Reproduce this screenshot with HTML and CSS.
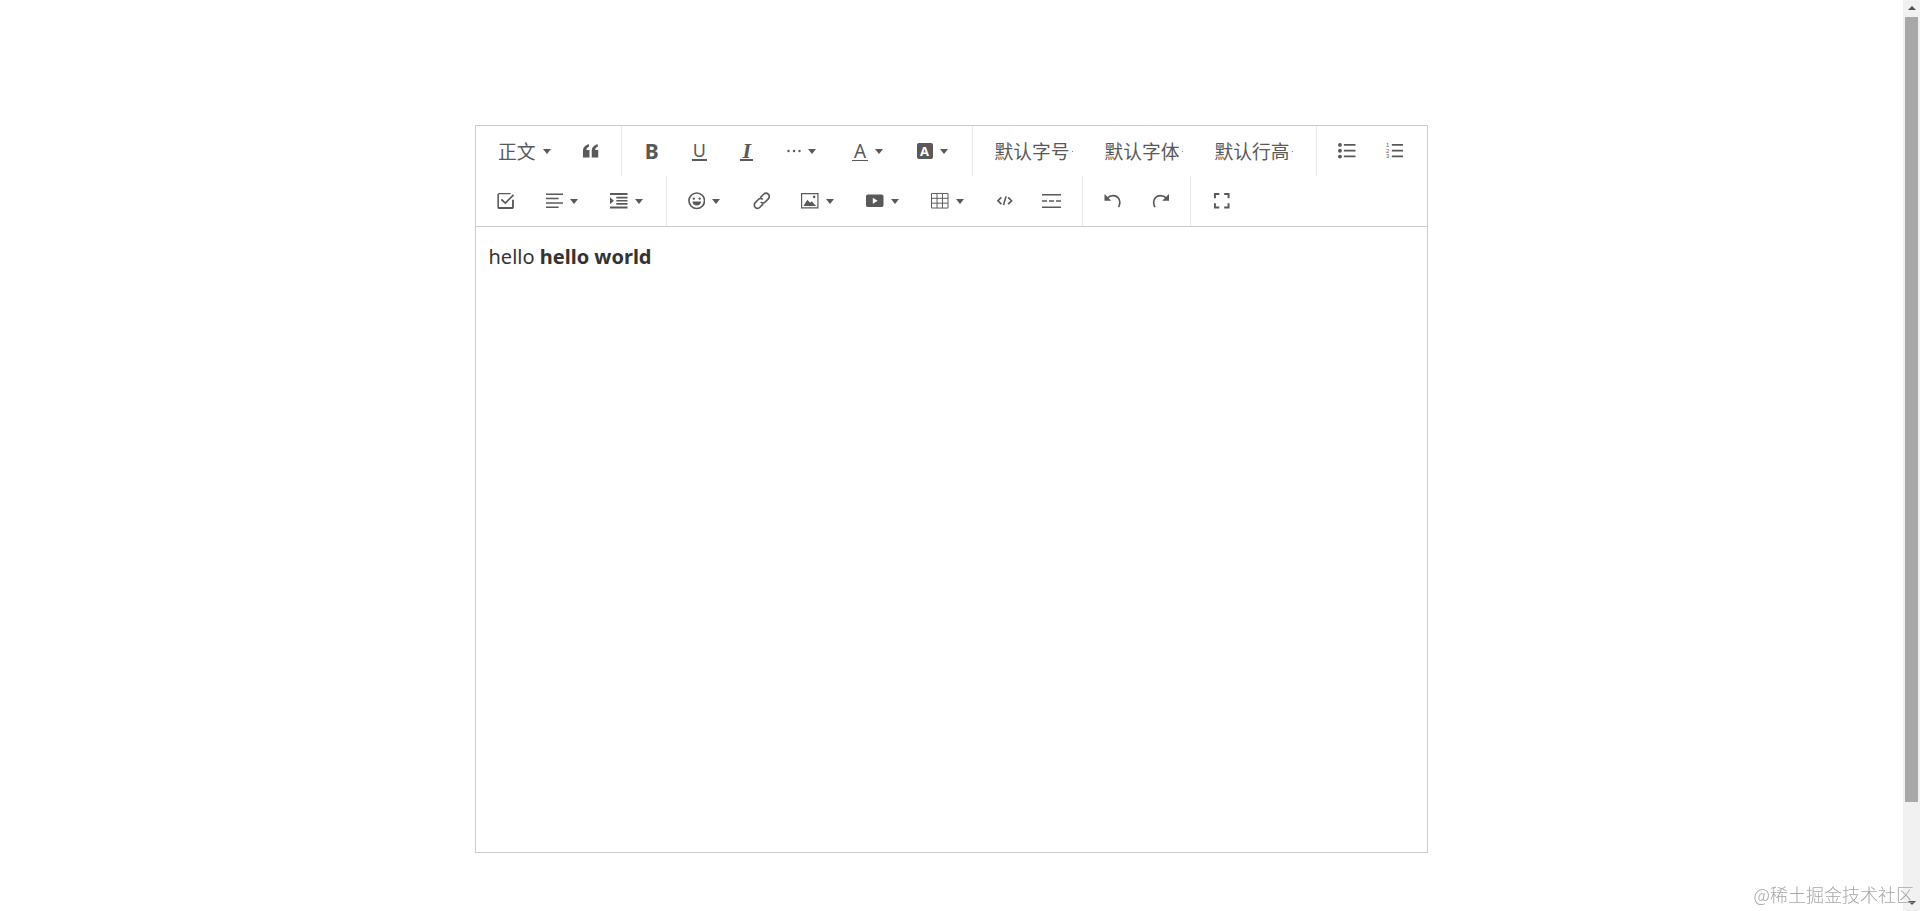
FILE: index.html
```html
<!DOCTYPE html>
<html lang="zh">
<head>
<meta charset="utf-8">
<title>Editor</title>
<link rel="stylesheet" href="styles.css">
</head>
<body>
<main class="page">
  <section class="editor">
    <div class="toolbar">
      <div class="row">
        <div class="item w85 pl16"><span class="label">正文</span><i class="caret"></i></div>
        <div class="item">
          <svg class="icon" viewBox="0 0 18 18"><path d="M1 16V9.5C1 5.5 3.200 3 7.200 2.200V4.800C5.500 5.300 4.700 6.300 4.600 8.200H7.700V16ZM10 16V9.500C10 5.500 12.200 3 16.200 2.200V4.800C14.500 5.300 13.700 6.300 13.600 8.200H16.700V16Z"/></svg>
        </div>
        <i class="divider"></i>
        <div class="item"><span class="g-bold">B</span></div>
        <div class="item"><span class="g-under">U</span></div>
        <div class="item"><span class="g-italic">I</span></div>
        <div class="item w62 pl16">
          <svg class="icon-more" viewBox="0 0 14 4"><circle cx="1.500" cy="2" r="1.200"/><circle cx="7" cy="2" r="1.200"/><circle cx="12.500" cy="2" r="1.200"/></svg><i class="caret"></i>
        </div>
        <div class="item w65 pl19"><span class="g-color">A</span><i class="caret"></i></div>
        <div class="item w68 pl18"><span class="g-bg">A</span><i class="caret"></i></div>
        <i class="divider"></i>
        <div class="item w110 pl15"><span class="label">默认字号</span><i class="dot"></i></div>
        <div class="item w110 pl15"><span class="label">默认字体</span><i class="dot"></i></div>
        <div class="item w110 pl15"><span class="label">默认行高</span><i class="dot"></i></div>
        <i class="divider"></i>
        <div class="item">
          <svg class="icon" viewBox="0 0 18 18"><circle cx="2" cy="3" r="2"/><circle cx="2" cy="9" r="2"/><circle cx="2" cy="15" r="2"/><path d="M6 2h12v1.800H6zM6 8h12v1.800H6zM6 14h12v1.800H6z"/></svg>
        </div>
        <div class="item">
          <svg class="icon" viewBox="0 0 18 18"><text class="tiny" x="0" y="5.500">1</text><text class="tiny" x="0" y="11">2</text><text class="tiny" x="0" y="16.500">3</text><path d="M6 2h12v1.800H6zM6 8h12v1.800H6zM6 14h12v1.800H6z"/></svg>
        </div>
      </div>
      <div class="row">
        <div class="item">
          <svg class="icon" viewBox="0 0 18 18"><path d="M2.500 1H14V2.200H2.500C2.300 2.200 2 2.500 2 2.700V15C2 15.300 2.300 15.500 2.500 15.500H15C15.300 15.500 15.500 15.300 15.500 15V8H17.400V15.500C17.400 16.700 16.500 17.600 15.300 17.600H2.500C1.300 17.600.4 16.700.4 15.500V2.800C.4 1.800 1.300 1 2.500 1Z"/><path d="M4.500 7.500L8.500 11.500L17 3" class="line"/></svg>
        </div>
        <div class="item w63 pl16">
          <svg class="icon" viewBox="0 0 18 18"><path d="M0 1.500h18v1.500H0zM0 6h13v1.500H0zM0 10.500h18v1.500H0zM0 15h13v1.500H0z"/></svg><i class="caret"></i>
        </div>
        <div class="item w67 pl17">
          <svg class="icon" viewBox="0 0 18 18"><path d="M0 1h18v2H0zM6.500 5H18v1.600H6.500zM6.500 8.200H18v1.600H6.500zM6.500 11.400H18v1.600H6.500zM0 15h18v2H0zM0 5.500L4 9L0 12.500Z"/></svg><i class="caret"></i>
        </div>
        <i class="divider"></i>
        <div class="item w64 pl14">
          <svg class="icon" viewBox="0 0 18 18"><circle cx="9" cy="9" r="8" class="line"/><circle cx="6" cy="6.800" r="1.200"/><circle cx="12" cy="6.800" r="1.200"/><path d="M4.500 9.800H13.500C13.300 12.300 11.500 14 9 14C6.500 14 4.700 12.300 4.500 9.800Z"/></svg><i class="caret"></i>
        </div>
        <div class="item">
          <svg class="icon" viewBox="0 0 18 18"><g class="line"><path d="M7.500 5.700L10.900 2.300A3.200 3.200 0 0 1 15.700 7L12.500 10.300A3 3 0 0 1 8 10.300"/><path d="M10.500 12.300L7.100 15.700A3.200 3.200 0 0 1 2.300 11L5.500 7.700A3 3 0 0 1 10 7.700"/></g></svg>
        </div>
        <div class="item w64 pl16">
          <svg class="icon" viewBox="0 0 18 18"><path d="M0 1h18v16H0zM1.200 2.200V15.800H16.800V2.200Z" fill-rule="evenodd"/><path d="M2.500 14.500L6.500 8L9.500 11L11 9.500L15.500 14.500Z"/><circle cx="13.500" cy="5" r="1.300"/></svg><i class="caret"></i>
        </div>
        <div class="item w65 pl17">
          <svg class="icon" viewBox="0 0 18 18"><path fill-rule="evenodd" d="M2 2.500H16C17.100 2.500 18 3.400 18 4.500V13.500C18 14.600 17.100 15.500 16 15.500H2C.9 15.500 0 14.600 0 13.500V4.500C0 3.400.9 2.500 2 2.500ZM7 6V12L12 9Z"/></svg><i class="caret"></i>
        </div>
        <div class="item w66 pl17">
          <svg class="icon" viewBox="0 0 18 18"><path class="thin" d="M.5 1.500h17v15H.5zM.5 6.500h17M.5 11.500h17M6.200 1.500v15M11.800 1.500v15"/></svg><i class="caret"></i>
        </div>
        <div class="item">
          <svg class="icon" viewBox="0 0 18 18"><g class="line"><path d="M5.500 5.500L2 9L5.500 12.500M12.500 5.500L16 9L12.500 12.500M10.300 4.500L7.700 13.500"/></g></svg>
        </div>
        <div class="item">
          <svg class="icon-wide" viewBox="0 0 19 18"><path d="M0 2h19v1.500H0zM0 14.500h19V16H0zM0 8.300h5v1.500H0zM7 8.300h5v1.500H7zM14 8.300h5v1.500H14z"/></svg>
        </div>
        <i class="divider"></i>
        <div class="item">
          <svg class="icon" viewBox="0 0 18 18"><path class="line" d="M3 6.500C5 4.500 7 3.800 9.500 3.800C13.500 3.800 16.300 6.800 16.300 10.500C16.300 12.500 15.800 14 15 15.500"/><path d="M.5 2V9H7.500Z"/></svg>
        </div>
        <div class="item">
          <svg class="icon" viewBox="0 0 18 18"><path class="line" d="M15 6.500C13 4.500 11 3.800 8.500 3.800C4.500 3.800 1.700 6.800 1.700 10.500C1.700 12.500 2.200 14 3 15.500"/><path d="M17.500 2V9H10.500Z"/></svg>
        </div>
        <i class="divider"></i>
        <div class="item">
          <svg class="icon" viewBox="0 0 18 18"><path d="M1 1h5.500v2H3v3.500H1zM11.500 1H17v5.500h-2V3h-3.500zM1 11.500h2V15h3.500v2H1zM15 11.500h2V17h-5.500v-2H15z"/></svg>
        </div>
      </div>
    </div>
    <div class="content">
      <p class="para">hello <strong class="strong">hello world</strong></p>
    </div>
  </section>
</main>
<div class="scrollbar">
  <i class="arrow-up"></i>
  <div class="thumb"></div>
  <i class="arrow-down"></i>
</div>
<div class="watermark">@稀土掘金技术社区</div>
</body>
</html>
```

FILE: styles.css
```css
* { box-sizing: border-box; }
html, body { margin: 0; height: 911px; overflow: hidden; background: #fff; }
body { font-family: "Noto Sans", "Noto Sans CJK SC", sans-serif; color: #333; }

.page { width: 1903px; padding-top: 125px; }
.editor {
  width: 953px;
  height: 728px;
  margin: 0 auto;
  border: 1px solid #ccc;
  display: flex;
  flex-direction: column;
}
.toolbar { padding: 0 6px; border-bottom: 1px solid #ccc; height: 101px; flex: none; }
.row { display: flex; height: 50px; align-items: stretch; }

.item {
  width: 47.5px;
  flex: none;
  display: flex;
  align-items: center;
  justify-content: center;
  fill: #595959;
  color: #595959;
}
.w62 { width: 62.5px; }
.w63 { width: 63.5px; }
.w64 { width: 64px; }
.w65 { width: 65px; }
.w66 { width: 66.5px; }
.w67 { width: 67px; }
.w68 { width: 68px; }
.w85 { width: 85px; }
.w110 { width: 110px; }
.pl14, .pl15, .pl16, .pl17, .pl18, .pl19 { justify-content: flex-start; }
.pl14 { padding-left: 14.3px; }
.pl15 { padding-left: 15px; }
.pl16 { padding-left: 16px; }
.pl17 { padding-left: 17px; }
.pl18 { padding-left: 18.5px; }
.pl19 { padding-left: 19px; }

.divider { flex: none; width: 1px; margin: 0 6.25px; background: #e8e8e8; }
.label { font: 18.75px/1 "Noto Sans CJK SC", "Noto Sans", sans-serif; white-space: nowrap; }
.caret {
  flex: none;
  width: 0;
  height: 0;
  margin-left: 7px;
  border-left: 4px solid transparent;
  border-right: 4px solid transparent;
  border-top: 5px solid #595959;
}
.dot { flex: none; width: 1px; height: 1px; margin-left: 2px; background: #8c8c8c; }
.icon { width: 17.5px; height: 17.5px; flex: none; }
.icon-wide { width: 19px; height: 18px; flex: none; }
.icon-more { width: 14px; height: 4px; flex: none; }
.line { fill: none; stroke: #595959; stroke-width: 1.700; }
.thin { fill: none; stroke: #595959; stroke-width: 1; }
.tiny { font: 6px "Liberation Sans", sans-serif; fill: #595959; }

.g-bold { font: 700 21px/1 "Noto Sans", sans-serif; }
.g-under {
  font: 400 18px/17px "Noto Sans", sans-serif;
  border-bottom: 2px solid #595959;
  width: 15px;
  text-align: center;
  height: 19px;
}
.g-italic { font: italic 700 22px/1 "Liberation Serif", serif; border-bottom: 2px solid #595959; padding: 0 2px; height: 20px; line-height: 19px; }
.g-color {
  font: 400 19px/18px "Noto Sans", sans-serif;
  border-bottom: 1.500px solid #595959;
  width: 16px;
  height: 19px;
  text-align: center;
}
.g-bg {
  font: 700 13px/17px "Noto Sans", sans-serif;
  color: #fff;
  background: #595959;
  width: 16px;
  height: 16px;
  border-radius: 2px;
  text-align: center;
}

.content { flex: 1; padding: 0 12.500px; }
.para { margin: 0; padding-top: 15px; font-size: 20px; line-height: 30px; color: #333; }
.strong { font-weight: 700; }

.scrollbar {
  position: fixed;
  top: 0;
  right: 0;
  width: 17px;
  height: 911px;
  background: #f1f1f1;
}
.thumb {
  position: absolute;
  top: 17px;
  left: 2px;
  width: 13px;
  height: 785px;
  background: #a8a8a8;
}
.arrow-up, .arrow-down {
  position: absolute;
  left: 4.500px;
  width: 0;
  height: 0;
  border-left: 4px solid transparent;
  border-right: 4px solid transparent;
}
.arrow-up { top: 6px; border-bottom: 4px solid #505050; }
.arrow-down { bottom: 6px; border-top: 4px solid #505050; }

.watermark {
  position: fixed;
  right: 6px;
  bottom: 6px;
  font: 300 18px/22px "Noto Sans CJK SC", sans-serif;
  color: #a6a6a6;
  white-space: nowrap;
}
```
